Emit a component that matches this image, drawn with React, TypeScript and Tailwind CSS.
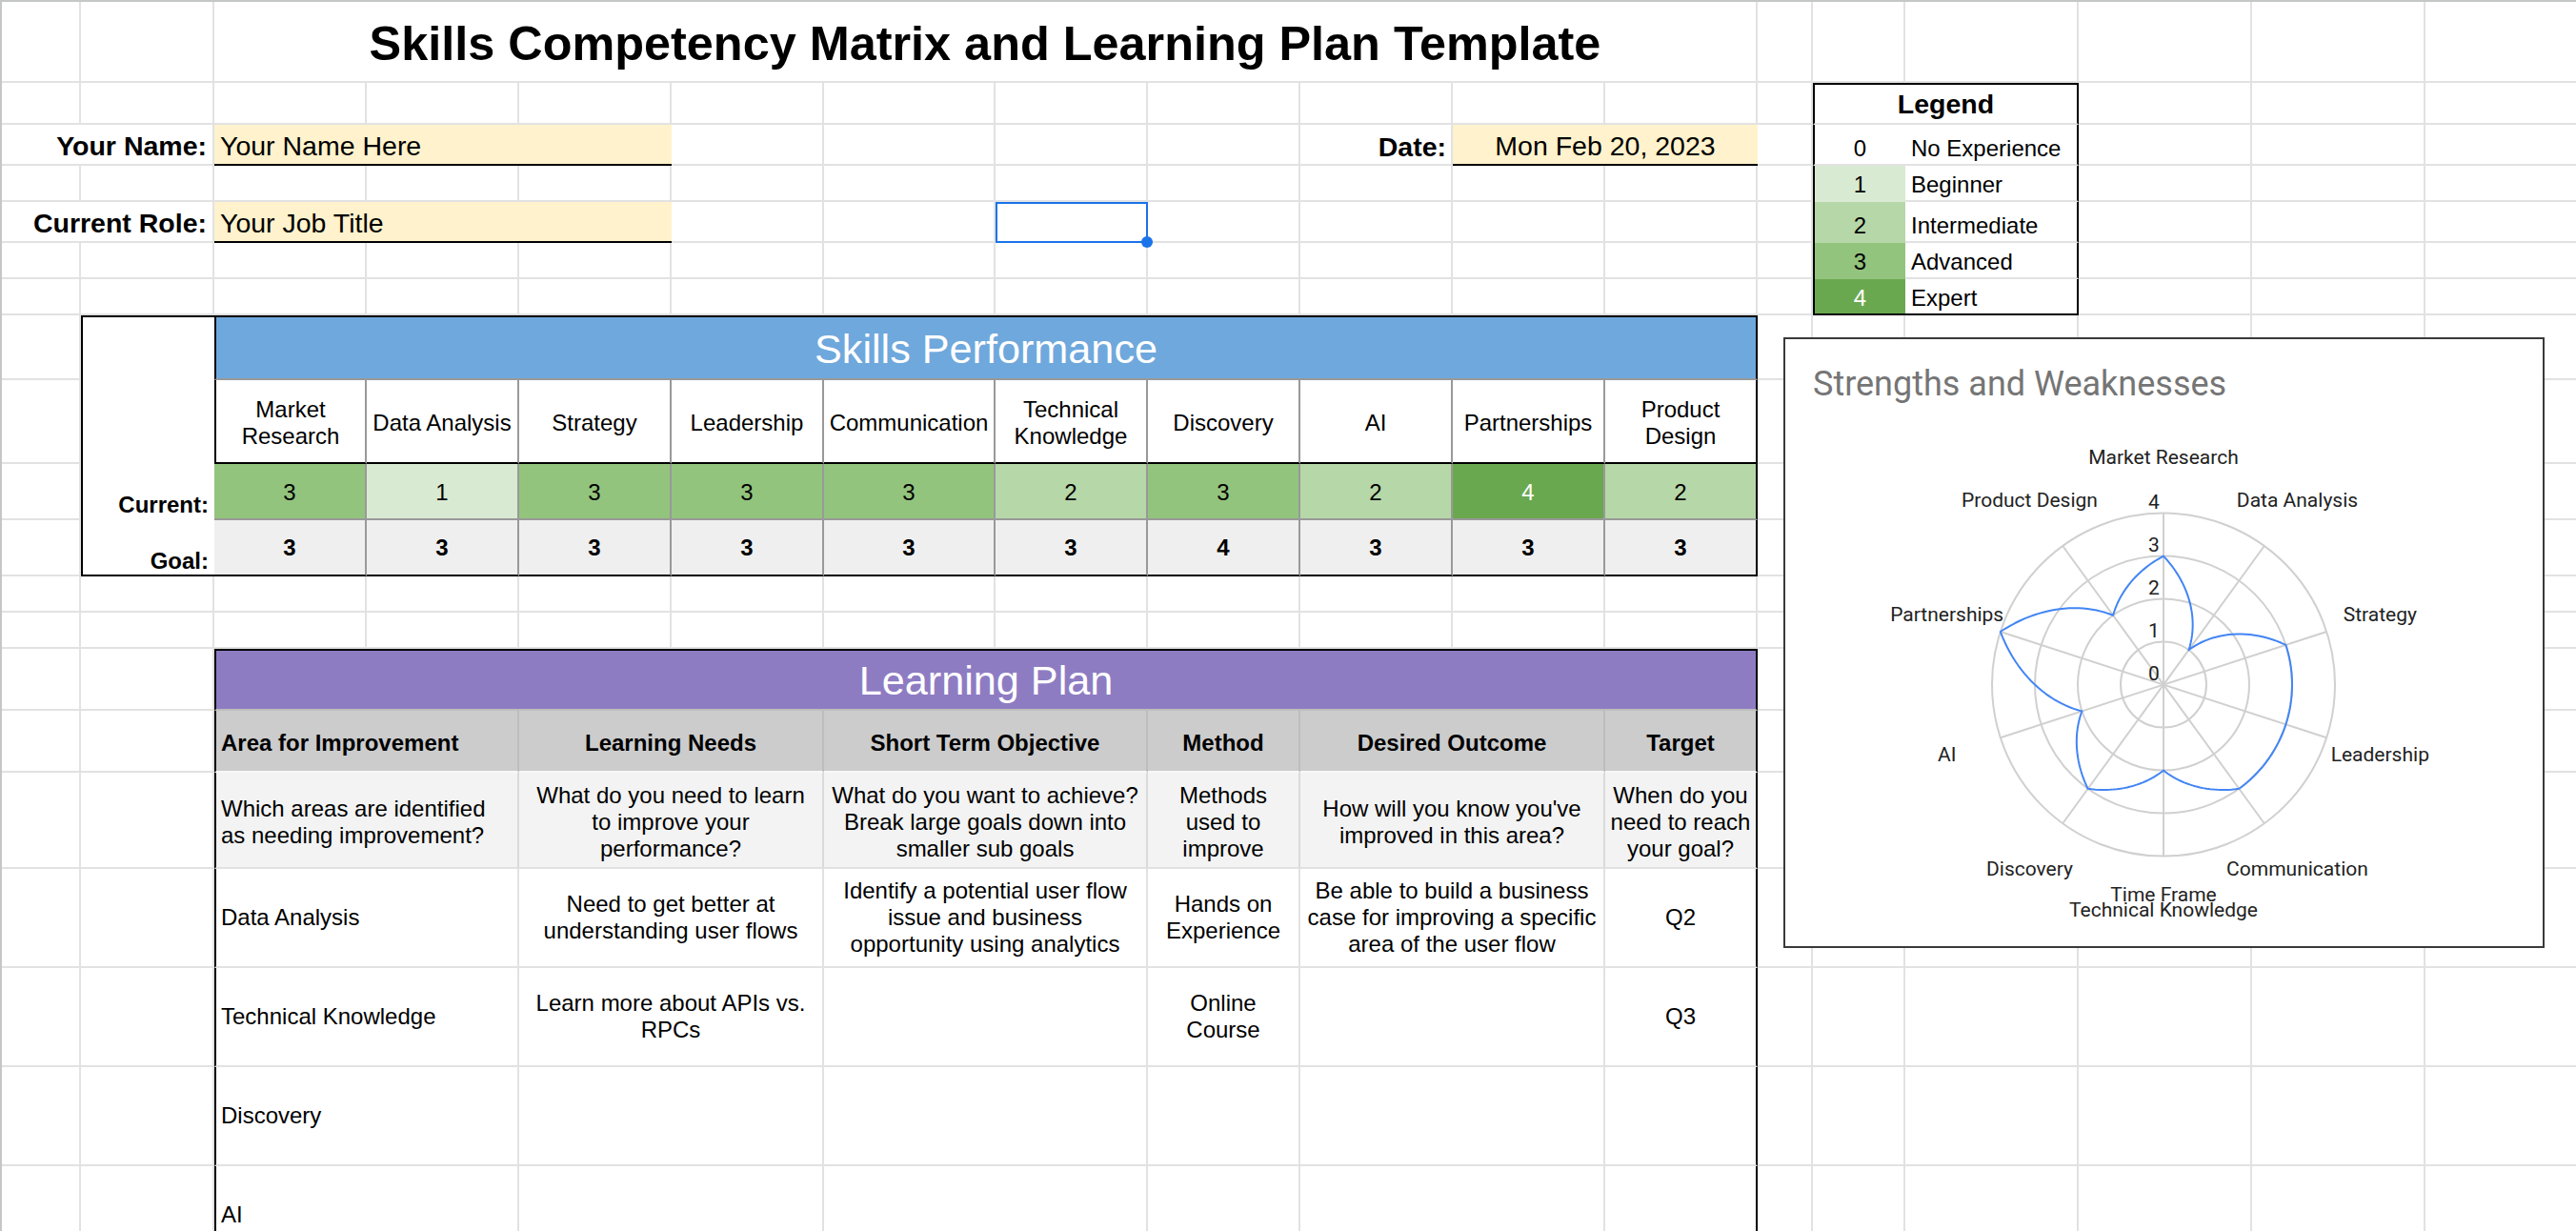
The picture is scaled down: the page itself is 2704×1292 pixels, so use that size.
import React from "react";

const COLS =
  "grid-cols-[83px_140px_160px_160px_160px_160px_180px_160px_160px_160px_160px_160px_58px_97px_182px_182px_182px_182px]";
const ROWS =
  "grid-rows-[85px_44px_43px_38px_43px_38px_38px_68px_88px_59px_59px_38px_38px_65px_65px_101px_104px_104px_104px_104px]";

const skills: { name: string[]; cur: number; goal: number }[] = [
  { name: ["Market", "Research"], cur: 3, goal: 3 },
  { name: ["Data Analysis"], cur: 1, goal: 3 },
  { name: ["Strategy"], cur: 3, goal: 3 },
  { name: ["Leadership"], cur: 3, goal: 3 },
  { name: ["Communication"], cur: 3, goal: 3 },
  { name: ["Technical", "Knowledge"], cur: 2, goal: 3 },
  { name: ["Discovery"], cur: 3, goal: 4 },
  { name: ["AI"], cur: 2, goal: 3 },
  { name: ["Partnerships"], cur: 4, goal: 3 },
  { name: ["Product", "Design"], cur: 2, goal: 3 },
];

const LVL = [
  "bg-white text-black",
  "bg-[#d9ead3] text-black",
  "bg-[#b6d7a8] text-black",
  "bg-[#93c47d] text-black",
  "bg-[#6aa84f] text-white",
];

const planRows: string[][][] = [
  [
    ["Area for Improvement"],
    ["Learning Needs"],
    ["Short Term Objective"],
    ["Method"],
    ["Desired Outcome"],
    ["Target"],
  ],
  [
    ["Which areas are identified", "as needing improvement?"],
    ["What do you need to learn", "to improve your", "performance?"],
    ["What do you want to achieve?", "Break large goals down into", "smaller sub goals"],
    ["Methods", "used to", "improve"],
    ["How will you know you've", "improved in this area?"],
    ["When do you", "need to reach", "your goal?"],
  ],
  [
    ["Data Analysis"],
    ["Need to get better at", "understanding user flows"],
    ["Identify a potential user flow", "issue and business", "opportunity using analytics"],
    ["Hands on", "Experience"],
    ["Be able to build a business", "case for improving a specific", "area of the user flow"],
    ["Q2"],
  ],
  [
    ["Technical Knowledge"],
    ["Learn more about APIs vs.", "RPCs"],
    [],
    ["Online", "Course"],
    [],
    ["Q3"],
  ],
  [["Discovery"], [], [], [], [], []],
  [["AI"], [], [], [], [], []],
];

function planCellClass(r: number, c: number): string {
  const parts: string[] = [
    "flex flex-col justify-center text-[24px] leading-[28px] border-r-2 border-b-2",
  ];
  if (c === 0) parts.push("items-start pl-[5px] border-l-2 border-l-black");
  else parts.push("items-center text-center");
  if (r === 0) {
    parts.push("bg-[#cccccc] font-bold border-b-[#f7f7f7] pt-[4px]");
    parts.push(c === 5 ? "border-r-black" : "border-r-[#bdbdbd]");
  } else if (r === 1) {
    parts.push("bg-[#f3f3f3] border-b-[#e2e2e2] pt-[4px]");
    parts.push(c === 5 ? "border-r-black" : "border-r-[#dadada]");
  } else {
    parts.push("bg-white border-b-[#e2e2e2]");
    parts.push(c === 5 ? "border-r-black" : "border-r-[#e2e2e2]");
  }
  return parts.join(" ");
}

function RadarChart() {
  const cx = 399;
  const cy = 364.6;
  const unit = 45;
  const vals = [3, 1, 3, 3, 3, 2, 3, 2, 4, 2];
  const labels = [
    "Market Research",
    "Data Analysis",
    "Strategy",
    "Leadership",
    "Communication",
    "Technical Knowledge",
    "Discovery",
    "AI",
    "Partnerships",
    "Product Design",
  ];
  const pts: string[] = [];
  for (let i = 0; i < 10; i++) {
    const v0 = vals[i];
    const v1 = vals[(i + 1) % 10];
    for (let s = 0; s < 24; s++) {
      const t = s / 24;
      const a = ((i + t) * 36 * Math.PI) / 180;
      const r = (v0 + (v1 - v0) * t) * unit;
      pts.push(`${(cx + r * Math.sin(a)).toFixed(2)},${(cy - r * Math.cos(a)).toFixed(2)}`);
    }
  }
  const path = "M" + pts.join(" L") + " Z";
  const labelPos = labels.map((l, i) => {
    const a = (i * 36 * Math.PI) / 180;
    const x = cx + 239 * Math.sin(a);
    let y = cy - 239 * Math.cos(a);
    if (i === 5) y = 601;
    return { l, x, y };
  });
  return (
    <div className="col-start-13 col-span-6 row-start-8 row-span-9 self-start justify-self-start ml-[27px] mt-[23px] w-[799px] h-[641px] border-2 border-[#3a3a3a] bg-white flex flex-col">
      <div className="h-[70px] pl-[29px] pt-[26px] text-[36px] leading-[42px] text-[#757575] font-['Roboto',sans-serif] whitespace-nowrap">
        Strengths and Weaknesses
      </div>
      <svg width={795} height={567} viewBox="2 72 795 567" className="block">
        {[1, 2, 3, 4].map((k) => (
          <circle key={k} cx={cx} cy={cy} r={k * unit} fill="none" stroke="#d0d0d0" strokeWidth={2} />
        ))}
        {labels.map((_, i) => {
          const a = (i * 36 * Math.PI) / 180;
          return (
            <line
              key={i}
              x1={cx}
              y1={cy}
              x2={cx + 180 * Math.sin(a)}
              y2={cy - 180 * Math.cos(a)}
              stroke="#d0d0d0"
              strokeWidth={2}
            />
          );
        })}
        <path d={path} fill="none" stroke="#4285f4" strokeWidth={2} strokeLinejoin="round" />
        {[0, 1, 2, 3, 4].map((k) => (
          <text
            key={k}
            x={389}
            y={cy - k * unit - 12}
            fontFamily="Roboto, sans-serif"
            fontSize={21}
            fill="#222"
            textAnchor="middle"
            dominantBaseline="central"
          >
            {k}
          </text>
        ))}
        {labelPos.map((p) => (
          <text
            key={p.l}
            x={p.x}
            y={p.y}
            fontFamily="Roboto, sans-serif"
            fontSize={21}
            fill="#222"
            textAnchor="middle"
            dominantBaseline="central"
          >
            {p.l}
          </text>
        ))}
        <text
          x={cx}
          y={585}
          fontFamily="Roboto, sans-serif"
          fontSize={21}
          fill="#222"
          textAnchor="middle"
          dominantBaseline="central"
        >
          Time Frame
        </text>
      </svg>
    </div>
  );
}

export default function App() {
  return (
    <div className="w-[2704px] h-[1292px] overflow-hidden bg-white font-['Liberation_Sans',Arial,sans-serif] text-black">
      <div className="grid w-[2728px] border-t-2 border-l-2 border-[#c4c7c5]">
        {/* gridlines layer */}
        <div className={`col-start-1 row-start-1 grid ${COLS} ${ROWS}`}>
          {Array.from({ length: 360 }).map((_, i) => (
            <div key={i} className="border-r-2 border-b-2 border-[#e2e2e2]" />
          ))}
        </div>

        {/* content layer */}
        <div className={`col-start-1 row-start-1 grid ${COLS} ${ROWS}`}>
          {/* Title */}
          <div className="col-start-3 col-span-10 row-start-1 bg-white border-r-2 border-b-2 border-[#e2e2e2] flex items-center justify-center pt-[5px] text-[50.4px] font-bold whitespace-nowrap">
            Skills Competency Matrix and Learning Plan Template
          </div>

          {/* Name */}
          <div className="col-start-1 col-span-2 row-start-3 bg-white border-r-2 border-b-2 border-[#e2e2e2] flex items-center justify-end pr-[6px] pt-[3px] text-[28.5px] font-bold whitespace-nowrap">
            Your Name:
          </div>
          <div className="col-start-3 col-span-3 row-start-3 bg-[#fff2cc] border-b-2 border-black flex items-center pl-[6px] pt-[3px] text-[28.5px] whitespace-nowrap">
            Your Name Here
          </div>

          {/* Role */}
          <div className="col-start-1 col-span-2 row-start-5 bg-white border-r-2 border-b-2 border-[#e2e2e2] flex items-center justify-end pr-[6px] pt-[3px] text-[28.5px] font-bold whitespace-nowrap">
            Current Role:
          </div>
          <div className="col-start-3 col-span-3 row-start-5 bg-[#fff2cc] border-b-2 border-black flex items-center pl-[6px] pt-[3px] text-[28.5px] whitespace-nowrap">
            Your Job Title
          </div>

          {/* Date */}
          <div className="col-start-10 row-start-3 flex items-center justify-end pr-[7px] pt-[3px] text-[28.5px] font-bold whitespace-nowrap">
            Date:
          </div>
          <div className="col-start-11 col-span-2 row-start-3 bg-[#fff2cc] border-b-2 border-black flex items-center justify-center pt-[3px] text-[28.5px] whitespace-nowrap">
            Mon Feb 20, 2023
          </div>

          {/* Selected cell */}
          <div className="col-start-8 row-start-5 relative border-2 border-[#1a73e8]">
            <div className="absolute -right-[7px] -bottom-[7px] w-[12px] h-[12px] rounded-full bg-[#1a73e8]" />
          </div>

          {/* Legend */}
          <div className="col-start-14 col-span-2 row-start-2 bg-white border-2 border-t-black border-x-black border-b-[#e2e2e2] flex items-center justify-center text-[28.5px] font-bold">
            Legend
          </div>
          <div className="col-start-14 row-start-3 bg-white border-l-2 border-l-black border-b-2 border-b-[#e2e2e2] flex items-end justify-center pb-[2px] text-[24px] leading-[28px]">
            0
          </div>
          <div className="col-start-15 row-start-3 bg-white border-r-2 border-r-black border-b-2 border-b-[#e2e2e2] flex items-end pl-[6px] pb-[2px] text-[24px] leading-[28px] whitespace-nowrap">
            No Experience
          </div>
          <div className="col-start-14 row-start-4 bg-[#d9ead3] border-l-2 border-l-black flex items-end justify-center pb-[4px] text-[24px] leading-[28px]">
            1
          </div>
          <div className="col-start-15 row-start-4 bg-white border-r-2 border-r-black border-b-2 border-b-[#e2e2e2] flex items-end pl-[6px] pb-[2px] text-[24px] leading-[28px]">
            Beginner
          </div>
          <div className="col-start-14 row-start-5 bg-[#b6d7a8] border-l-2 border-l-black flex items-end justify-center pb-[4px] text-[24px] leading-[28px]">
            2
          </div>
          <div className="col-start-15 row-start-5 bg-white border-r-2 border-r-black border-b-2 border-b-[#e2e2e2] flex items-end pl-[6px] pb-[2px] text-[24px] leading-[28px]">
            Intermediate
          </div>
          <div className="col-start-14 row-start-6 bg-[#93c47d] border-l-2 border-l-black flex items-end justify-center pb-[4px] text-[24px] leading-[28px]">
            3
          </div>
          <div className="col-start-15 row-start-6 bg-white border-r-2 border-r-black border-b-2 border-b-[#e2e2e2] flex items-end pl-[6px] pb-[2px] text-[24px] leading-[28px]">
            Advanced
          </div>
          <div className="col-start-14 row-start-7 bg-[#6aa84f] text-white border-l-2 border-b-2 border-black flex items-end justify-center pb-[2px] text-[24px] leading-[28px]">
            4
          </div>
          <div className="col-start-15 row-start-7 bg-white border-r-2 border-b-2 border-black flex items-end pl-[6px] pb-[2px] text-[24px] leading-[28px]">
            Expert
          </div>

          {/* Skills table: left label column */}
          <div className="col-start-2 row-start-8 row-span-2 bg-white border-l-2 border-t-2 border-black" />
          <div className="col-start-2 row-start-10 bg-white border-l-2 border-black flex items-end justify-end pr-[6px] pb-[2px] text-[24px] leading-[28px] font-bold">
            Current:
          </div>
          <div className="col-start-2 row-start-11 bg-white border-l-2 border-b-2 border-black flex items-end justify-end pr-[6px] text-[24px] leading-[28px] font-bold">
            Goal:
          </div>

          {/* Skills header */}
          <div className="col-start-3 col-span-10 row-start-8 bg-[#6fa8dc] border-2 border-t-black border-x-black border-b-[#999999] flex items-center justify-center pt-[2px] text-white text-[43.2px] whitespace-nowrap">
            Skills Performance
          </div>

          {/* Skills body */}
          <div className="col-start-3 col-span-10 row-start-9 row-span-3 grid grid-cols-[160px_160px_160px_160px_180px_160px_160px_160px_160px_160px] grid-rows-[88px_59px_59px]">
            {skills.map((s, i) => (
              <div
                key={"n" + i}
                className={`bg-white border-r-2 border-b-2 border-b-black flex flex-col items-center justify-center pt-[3px] text-center text-[24px] leading-[28px] whitespace-nowrap ${
                  i === 0 ? "border-l-2 border-l-black" : ""
                } ${i === 9 ? "border-r-black" : "border-r-[#999999]"}`}
              >
                {s.name.map((n) => (
                  <div key={n}>{n}</div>
                ))}
              </div>
            ))}
            {skills.map((s, i) => (
              <div
                key={"c" + i}
                className={`${LVL[s.cur]} border-r-2 border-b-2 border-b-[#999999] flex items-center justify-center pt-[2px] text-[24px] leading-[28px] ${
                  i === 9 ? "border-r-black" : "border-r-[#999999]"
                }`}
              >
                {s.cur}
              </div>
            ))}
            {skills.map((s, i) => (
              <div
                key={"g" + i}
                className={`bg-[#efefef] border-r-2 border-b-2 border-b-black flex items-center justify-center text-[24px] leading-[28px] font-bold ${
                  i === 9 ? "border-r-black" : "border-r-[#999999]"
                }`}
              >
                {s.goal}
              </div>
            ))}
          </div>

          {/* Learning plan header */}
          <div className="col-start-3 col-span-10 row-start-14 bg-[#8e7cc3] border-2 border-t-black border-x-black border-b-[#bdbdbd] flex items-center justify-center pt-[2px] text-white text-[43.2px] whitespace-nowrap">
            Learning Plan
          </div>

          {/* Learning plan body */}
          <div className="col-start-3 col-span-10 row-start-15 row-span-6 grid grid-cols-[320px_320px_340px_160px_320px_160px] grid-rows-[65px_101px_104px_104px_104px_104px]">
            {planRows.map((row, r) =>
              row.map((lines, c) => (
                <div key={r + "-" + c} className={planCellClass(r, c)}>
                  {lines.map((ln) => (
                    <div key={ln} className="whitespace-nowrap">
                      {ln}
                    </div>
                  ))}
                </div>
              ))
            )}
          </div>

          {/* Chart */}
          <RadarChart />
        </div>
      </div>
    </div>
  );
}
